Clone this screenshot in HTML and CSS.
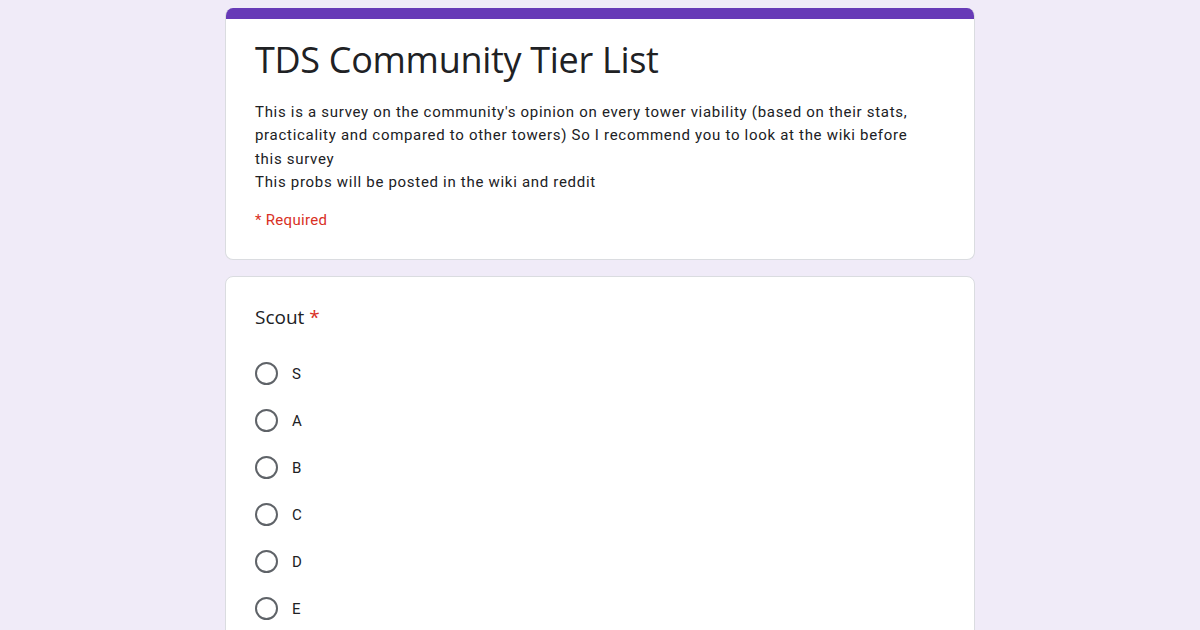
FILE: index.html
```html
<!DOCTYPE html>
<html>
<head>
<meta charset="utf-8">
<link rel="stylesheet" href="styles.css">
</head>
<body>
<main class="form">
  <section class="card header-card">
    <div class="header-bar"></div>
    <div class="header-body">
      <h1 class="title">TDS Community Tier List</h1>
      <p class="desc">This is a survey on the community's opinion on every tower viability (based on their stats, practicality and compared to other towers) So I recommend you to look at the wiki before this survey<br>This probs will be posted in the wiki and reddit</p>
      <div class="required">* Required</div>
    </div>
  </section>
  <section class="card question">
    <div class="q-title">Scout <span class="star">*</span></div>
    <ul class="options">
      <li class="option"><span class="radio"></span><span class="label">S</span></li>
      <li class="option"><span class="radio"></span><span class="label">A</span></li>
      <li class="option"><span class="radio"></span><span class="label">B</span></li>
      <li class="option"><span class="radio"></span><span class="label">C</span></li>
      <li class="option"><span class="radio"></span><span class="label">D</span></li>
      <li class="option"><span class="radio"></span><span class="label">E</span></li>
    </ul>
  </section>
</main>
</body>
</html>
```
FILE: styles.css
```css
html, body {
  margin: 0;
  padding: 0;
  background: #f0ebf8;
  height: 630px;
  overflow: hidden;
}
.form {
  width: 750px;
  margin: 8px auto 0;
  display: flex;
  flex-direction: column;
  gap: 16px;
}
.card {
  background: #fff;
  border: 1px solid #dadce0;
  border-radius: 8px;
  box-sizing: border-box;
}
.header-card {
  border-top: none;
  overflow: hidden;
}
.header-bar {
  height: 11px;
  background: #673ab7;
}
.header-body {
  padding: 17px 29px 29px;
}
.title {
  margin: 0;
  font-family: "Open Sans", "Noto Sans", sans-serif;
  font-weight: 400;
  font-size: 36px;
  line-height: 48px;
  color: #202124;
  letter-spacing: -0.3px;
}
.desc {
  margin: 17px 0 0;
  max-width: 670px;
  font-family: Roboto, "Liberation Sans", sans-serif;
  font-size: 15px;
  line-height: 23.3px;
  letter-spacing: 0.7px;
  color: #202124;
}
.required {
  margin-top: 16px;
  font-family: Roboto, "Liberation Sans", sans-serif;
  font-size: 15px;
  line-height: 20px;
  letter-spacing: 0.3px;
  color: #d93025;
}
.question {
  padding: 26px 29px 20px;
}
.q-title {
  font-family: "Open Sans", "Noto Sans", sans-serif;
  font-size: 19px;
  line-height: 28px;
  color: #202124;
}
.star {
  color: #d93025;
}
.options {
  list-style: none;
  margin: 19px 0 0;
  padding: 0;
  display: flex;
  flex-direction: column;
}
.option {
  display: flex;
  align-items: center;
  height: 47px;
}
.radio {
  width: 19px;
  height: 19px;
  border: 2px solid #5f6368;
  border-radius: 50%;
  flex: none;
}
.label {
  margin-left: 14px;
  font-family: Roboto, "Liberation Sans", sans-serif;
  font-size: 15px;
  color: #202124;
}
```
